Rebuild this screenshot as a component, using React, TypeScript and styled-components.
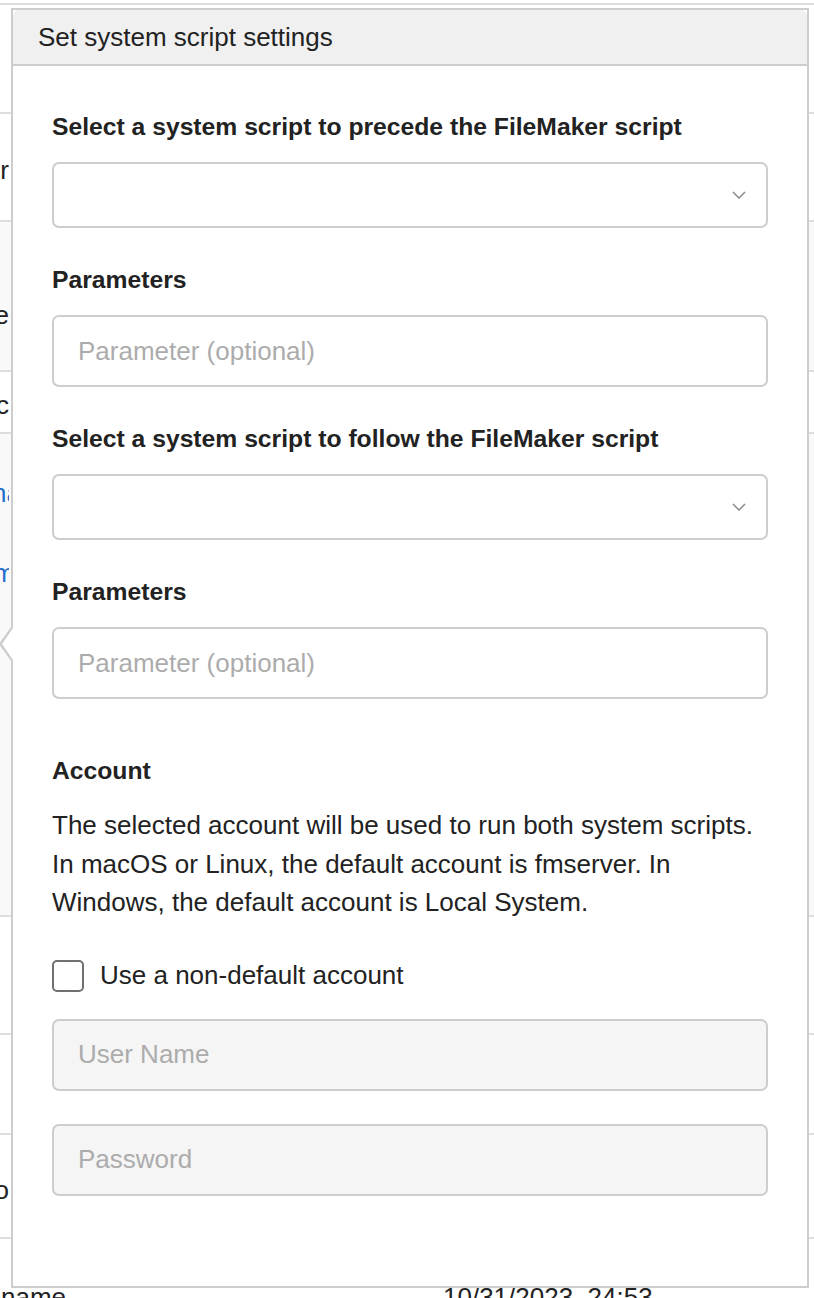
import * as React from 'react'
import styled, {createGlobalStyle} from 'styled-components'

const GlobalStyle = createGlobalStyle`
  html, body {
    margin: 0;
    padding: 0;
    height: 100%;
    overflow: hidden;
    background: #fff;
  }
  body {
    font-family: "Liberation Sans", Arial, Helvetica, sans-serif;
    color: #222;
  }
  * { box-sizing: border-box; }
`

// Page behind the popover
const Page = styled.div`
  position: relative;
  width: 814px;
  height: 1298px;
  overflow: hidden;
`

const Table = styled.div`
  display: flex;
  flex-direction: column;
`

const Row = styled.div<{$h: number; $shade?: boolean; $first?: boolean}>`
  display: flex;
  height: ${({$h}) => $h}px;
  flex: none;
  border-top: ${({$first}) => ($first ? 'none' : '2px solid #dedede')};
  background: ${({$shade}) => ($shade ? '#f9f9f9' : '#fff')};
`

const EdgeCell = styled.div<{$top: number; $gap?: number}>`
  width: 9px;
  overflow: hidden;
  display: flex;
  flex-direction: column;
  align-items: flex-end;
  gap: ${({$gap}) => $gap ?? 0}px;
  padding-top: ${({$top}) => $top}px;
`

const CellText = styled.span<{$link?: boolean; $shift?: number}>`
  font-size: 26px;
  line-height: 30px;
  white-space: nowrap;
  color: ${({$link}) => ($link ? '#1f6fce' : '#222')};
  margin-right: ${({$shift}) => $shift ?? 0}px;
`

const NameCell = styled.div`
  width: 66px;
  overflow: hidden;
  display: flex;
  justify-content: flex-end;
  padding-top: 43px;
`

const DateCell = styled.div`
  margin-left: 377px;
  padding-top: 43px;
`

// Popover
const Popover = styled.div`
  position: absolute;
  left: 11px;
  top: 8px;
  width: 798px;
  height: 1280px;
  background: #fff;
  border: 2px solid #cdcdcd;
  display: flex;
  flex-direction: column;

  &::before,
  &::after {
    content: '';
    position: absolute;
    width: 0;
    height: 0;
    border-style: solid;
    border-color: transparent;
  }
  &::before {
    left: -14px;
    top: 617px;
    border-width: 17px 12px 17px 0;
    border-right-color: #cdcdcd;
  }
  &::after {
    left: -11px;
    top: 618px;
    border-width: 16px 11px 16px 0;
    border-right-color: #fff;
  }
`

const Header = styled.div`
  height: 56px;
  flex: none;
  display: flex;
  align-items: center;
  padding-left: 25px;
  background: #f0f0f0;
  border-bottom: 2px solid #cdcdcd;
  border-radius: 6px 6px 0 0;
  font-size: 26px;
  color: #222;
`

const Body = styled.div`
  display: flex;
  flex-direction: column;
  padding: 46px 39px 0;
`

const FieldGroup = styled.div<{$after?: number}>`
  display: flex;
  flex-direction: column;
  gap: 20px;
  margin-bottom: ${({$after}) => $after ?? 37}px;
`

const Label = styled.div`
  font-size: 24.7px;
  line-height: 30px;
  font-weight: bold;
  color: #222;
`

const SelectBox = styled.div`
  height: 66px;
  border: 2px solid #cdcdcd;
  border-radius: 7px;
  display: flex;
  align-items: center;
  justify-content: flex-end;
  padding-right: 20px;
  background: #fff;
`

const TextInput = styled.input`
  height: 72px;
  width: 100%;
  border: 2px solid #cdcdcd;
  border-radius: 7px;
  padding: 0 24px;
  font-family: inherit;
  font-size: 26px;
  color: #222;
  background: #fff;
  outline: none;

  &::placeholder {
    color: #acacac;
  }
  &:disabled {
    background: #f5f5f5;
  }
`

const Paragraph = styled.p`
  margin: 0;
  font-size: 26px;
  line-height: 38.5px;
  color: #222;
`

const CheckRow = styled.label`
  display: flex;
  align-items: center;
  gap: 16px;
  height: 32px;
  margin: 38px 0 27px;
  font-size: 26px;
  color: #222;
`

const CheckBox = styled.input`
  appearance: none;
  margin: 0;
  width: 32px;
  height: 32px;
  border: 2px solid #707070;
  border-radius: 5px;
  background: #fff;
`

const InputStack = styled.div`
  display: flex;
  flex-direction: column;
  gap: 33px;
`

const Chevron = () => (
  <svg width="14" height="8" viewBox="0 0 14 8" fill="none">
    <path d="M1 1l6 6 6-6" stroke="#8a8a8a" strokeWidth="1.5" />
  </svg>
)

export default function App() {
  return (
    <Page>
      <GlobalStyle />
      <Table>
        <Row $h={3} $first />
        <Row $h={109} />
        <Row $h={108}>
          <EdgeCell $top={41}>
            <CellText>Order</CellText>
          </EdgeCell>
        </Row>
        <Row $h={150} $shade>
          <EdgeCell $top={78}>
            <CellText>Schedule</CellText>
          </EdgeCell>
        </Row>
        <Row $h={62}>
          <EdgeCell $top={18}>
            <CellText>Sync</CellText>
          </EdgeCell>
        </Row>
        <Row $h={483} $shade>
          <EdgeCell $top={44} $gap={50}>
            <CellText $link $shift={-12}>Run script na</CellText>
            <CellText $link $shift={-6}>Program</CellText>
          </EdgeCell>
        </Row>
        <Row $h={118} />
        <Row $h={100} />
        <Row $h={104}>
          <EdgeCell $top={40}>
            <CellText>Info</CellText>
          </EdgeCell>
        </Row>
        <Row $h={120}>
          <NameCell>
            <CellText>Filename</CellText>
          </NameCell>
          <DateCell>
            <CellText>10/31/2023&nbsp;&nbsp;24:53</CellText>
          </DateCell>
        </Row>
      </Table>

      <Popover>
        <Header>Set system script settings</Header>
        <Body>
          <FieldGroup>
            <Label>Select a system script to precede the FileMaker script</Label>
            <SelectBox>
              <Chevron />
            </SelectBox>
          </FieldGroup>
          <FieldGroup>
            <Label>Parameters</Label>
            <TextInput placeholder="Parameter (optional)" />
          </FieldGroup>
          <FieldGroup>
            <Label>Select a system script to follow the FileMaker script</Label>
            <SelectBox>
              <Chevron />
            </SelectBox>
          </FieldGroup>
          <FieldGroup $after={57}>
            <Label>Parameters</Label>
            <TextInput placeholder="Parameter (optional)" />
          </FieldGroup>
          <FieldGroup $after={0}>
            <Label>Account</Label>
            <Paragraph>
              The selected account will be used to run both system scripts.
              <br />
              In macOS or Linux, the default account is fmserver. In
              <br />
              Windows, the default account is Local System.
            </Paragraph>
          </FieldGroup>
          <CheckRow>
            <CheckBox type="checkbox" />
            Use a non-default account
          </CheckRow>
          <InputStack>
            <TextInput placeholder="User Name" disabled />
            <TextInput type="password" placeholder="Password" disabled />
          </InputStack>
        </Body>
      </Popover>
    </Page>
  )
}
